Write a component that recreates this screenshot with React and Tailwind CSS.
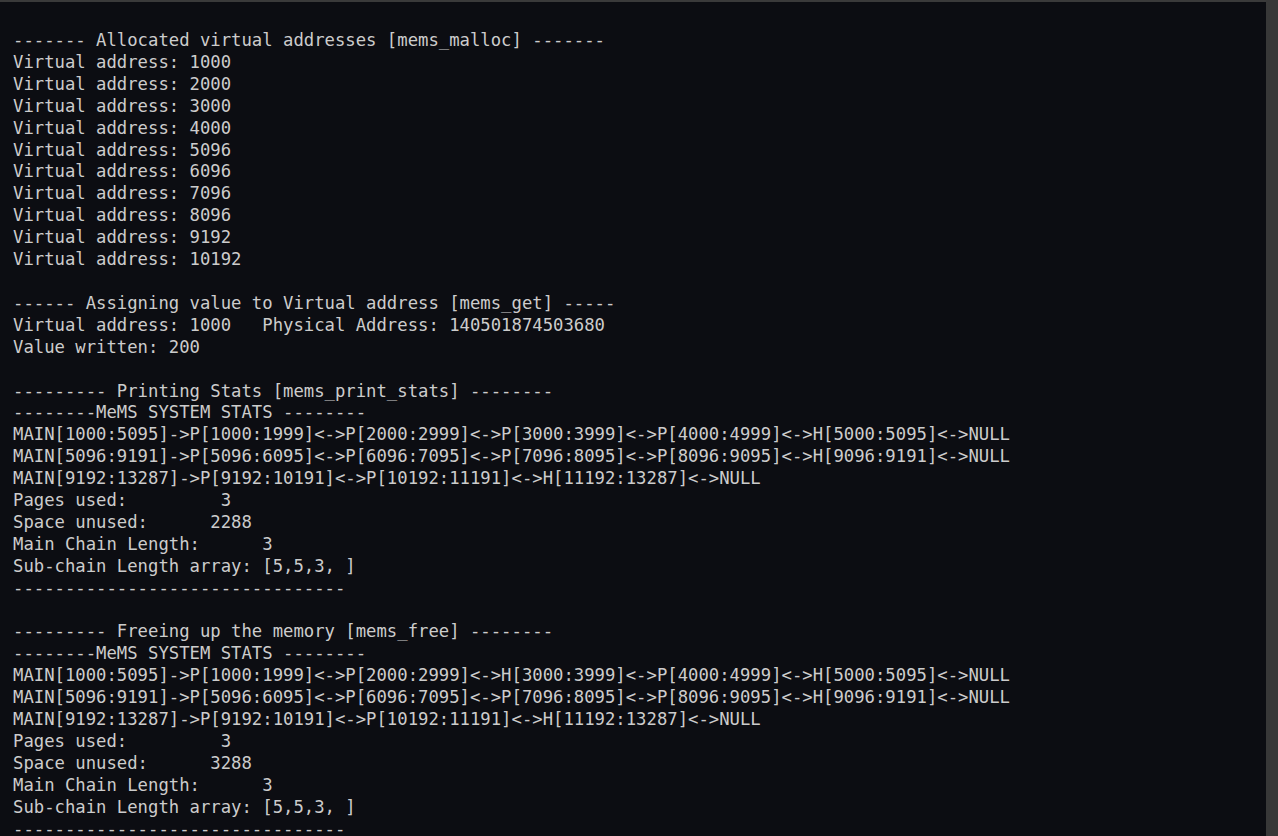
import React from 'react';

// terminal dump of the MeMS test run
const STATS_TAIL = [
  'Pages used:         3',
  'Main Chain Length:      3',
  'Sub-chain Length array: [5,5,3, ]',
];

const lines = [
  '------- Allocated virtual addresses [mems_malloc] -------',
  'Virtual address: 1000',
  'Virtual address: 2000',
  'Virtual address: 3000',
  'Virtual address: 4000',
  'Virtual address: 5096',
  'Virtual address: 6096',
  'Virtual address: 7096',
  'Virtual address: 8096',
  'Virtual address: 9192',
  'Virtual address: 10192',
  '',
  '------ Assigning value to Virtual address [mems_get] -----',
  'Virtual address: 1000   Physical Address: 140501874503680',
  'Value written: 200',
  '',
  '--------- Printing Stats [mems_print_stats] --------',
  '--------MeMS SYSTEM STATS --------',
  'MAIN[1000:5095]->P[1000:1999]<->P[2000:2999]<->P[3000:3999]<->P[4000:4999]<->H[5000:5095]<->NULL',
  'MAIN[5096:9191]->P[5096:6095]<->P[6096:7095]<->P[7096:8095]<->P[8096:9095]<->H[9096:9191]<->NULL',
  'MAIN[9192:13287]->P[9192:10191]<->P[10192:11191]<->H[11192:13287]<->NULL',
  STATS_TAIL[0],
  'Space unused:      2288',
  STATS_TAIL[1],
  STATS_TAIL[2],
  '--------------------------------',
  '',
  '--------- Freeing up the memory [mems_free] --------',
  '--------MeMS SYSTEM STATS --------',
  'MAIN[1000:5095]->P[1000:1999]<->P[2000:2999]<->H[3000:3999]<->P[4000:4999]<->H[5000:5095]<->NULL',
  'MAIN[5096:9191]->P[5096:6095]<->P[6096:7095]<->P[7096:8095]<->P[8096:9095]<->H[9096:9191]<->NULL',
  'MAIN[9192:13287]->P[9192:10191]<->P[10192:11191]<->H[11192:13287]<->NULL',
  STATS_TAIL[0],
  'Space unused:      3288',
  STATS_TAIL[1],
  STATS_TAIL[2],
  '--------------------------------',
];

const App = () => {
  return (
    <div className="flex h-[836px] w-full overflow-hidden bg-[#383838]">
      {/* Terminal pane */}
      <div className="flex-1 border-t-2 border-[#3a3a3a] bg-[#0c0d12] pl-[13px] pt-[28px]">
        <pre className="m-0 font-['DejaVu_Sans_Mono',monospace] text-[17.25px] leading-[21.92px] text-[#cccccc]">
          {lines.map((line, index) => (
            <div key={index} className="h-[21.92px] whitespace-pre">
              {line}
            </div>
          ))}
        </pre>
      </div>

      {/* Scrollbar gutter */}
      <div className="w-[12px] bg-[#383838]" />
    </div>
  );
};

export default App;
